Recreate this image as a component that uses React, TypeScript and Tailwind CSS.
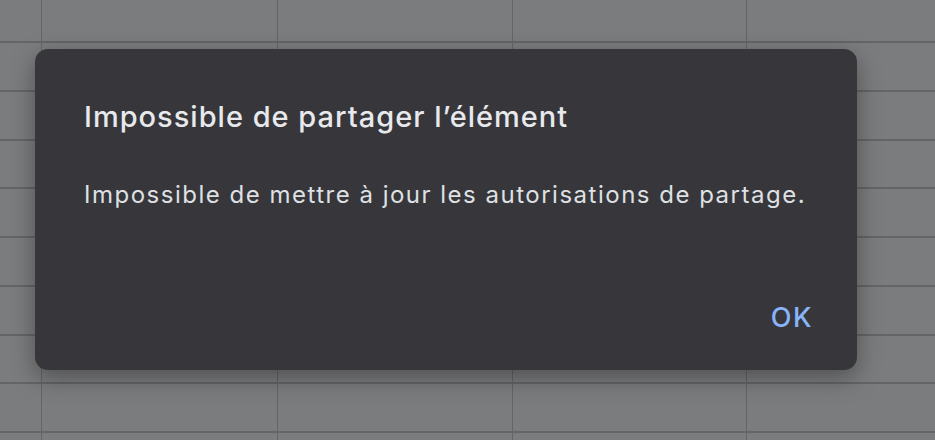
import React from "react";

const cells = Array.from({ length: 50 });

const App: React.FC = () => {
  return (
    <main className="relative h-[440px] w-[935px] overflow-hidden bg-[#646566]">
      {/* sheet grid behind the dialog */}
      <section className="grid h-full grid-cols-[41px_235px_234px_233px_1fr] grid-rows-[41px_repeat(9,46.75px)] gap-x-px gap-y-[2px]">
        {cells.map((_, index) => (
          <div key={index} className="bg-[#7b7c7d]" />
        ))}
      </section>

      <section className="absolute left-[35px] top-[49px] flex h-[321px] w-[822px] flex-col rounded-[13px] bg-[#36363b] pl-[49px] pr-[44px] shadow-[0_8px_24px_rgba(0,0,0,0.35)] [font-family:Inter,sans-serif]">
        <h1 className="mt-[48px] text-[29px] font-medium leading-[40px] tracking-[1px] text-[#e8e9ec]">
          Impossible de partager l’élément
        </h1>
        <p className="mt-[41px] text-[24px] leading-[34px] tracking-[1.5px] text-[#dfe0e3]">
          Impossible de mettre à jour les autorisations de partage.
        </p>
        <div className="mt-auto mb-[36px] flex justify-end">
          <button className="text-[27px] font-medium leading-[32px] tracking-[1.5px] text-[#8ab4f8]">OK</button>
        </div>
      </section>
    </main>
  );
};

export default App;
